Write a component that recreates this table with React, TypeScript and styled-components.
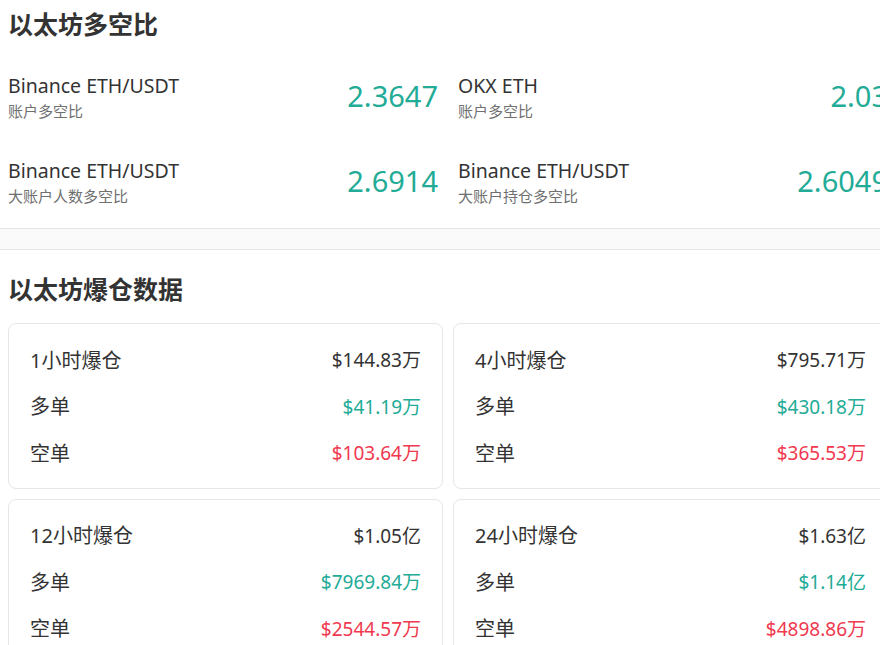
import React from "react";
import styled, { createGlobalStyle } from "styled-components";

const GlobalStyle = createGlobalStyle`
  html, body {
    margin: 0;
    padding: 0;
    overflow: hidden;
    background: #ffffff;
  }
  body {
    font-family: "Noto Sans", "Noto Sans CJK SC", sans-serif;
    color: #333333;
  }
`;

const GREEN = "#22ab96";
const RED = "#f0384f";

const Page = styled.div`
  width: 896px;
  background: #ffffff;
`;

const Section = styled.section<{ $top: number; $bottom: number }>`
  padding: ${(p) => p.$top}px 8px ${(p) => p.$bottom}px;
`;

const Title = styled.h2`
  margin: 0;
  font-family: "Noto Sans CJK SC", "Noto Sans", sans-serif;
  font-size: 25px;
  line-height: 32px;
  font-weight: 700;
  color: #333333;
`;

const RatioGrid = styled.div`
  display: grid;
  grid-template-columns: 430px 430px;
  column-gap: 20px;
  margin-top: 16px;
`;

const RatioItem = styled.div`
  display: flex;
  align-items: center;
  justify-content: space-between;
  padding: 18px 0;
`;

const RatioText = styled.div`
  display: flex;
  flex-direction: column;
  gap: 1px;
`;

const RatioName = styled.div`
  font-size: 19.5px;
  line-height: 26px;
  color: #333333;
`;

const RatioSub = styled.div`
  font-family: "Noto Sans CJK SC", sans-serif;
  font-size: 15px;
  line-height: 22px;
  color: #707070;
`;

const RatioValue = styled.div`
  font-size: 29px;
  line-height: 36px;
  color: ${GREEN};
  margin-top: -4px;
  white-space: nowrap;
`;

const Divider = styled.div`
  height: 20px;
  background: #fafafa;
  border-top: 1px solid #e6e6e6;
  border-bottom: 1px solid #e6e6e6;
`;

const CardGrid = styled.div`
  display: grid;
  grid-template-columns: 435px 435px;
  gap: 10px;
  margin-top: 19px;
`;

const Card = styled.div`
  border: 1px solid #e6e6e6;
  border-radius: 8px;
  padding: 12px 21px 12px 21px;
`;

const Row = styled.div`
  display: flex;
  align-items: center;
  justify-content: space-between;
  height: 46.5px;
`;

const RowLabel = styled.span`
  font-size: 20px;
  color: #333333;
`;

const RowValue = styled.span<{ $tone: "main" | "long" | "short" }>`
  font-size: 19px;
  color: ${(p) => (p.$tone === "long" ? GREEN : p.$tone === "short" ? RED : "#333333")};
`;

const ratios = [
  { name: "Binance ETH/USDT", sub: "账户多空比", value: "2.3647" },
  { name: "OKX ETH", sub: "账户多空比", value: "2.03" },
  { name: "Binance ETH/USDT", sub: "大账户人数多空比", value: "2.6914" },
  { name: "Binance ETH/USDT", sub: "大账户持仓多空比", value: "2.6049" },
];

const cards = [
  { label: "1小时爆仓", total: "$144.83万", long: "$41.19万", short: "$103.64万" },
  { label: "4小时爆仓", total: "$795.71万", long: "$430.18万", short: "$365.53万" },
  { label: "12小时爆仓", total: "$1.05亿", long: "$7969.84万", short: "$2544.57万" },
  { label: "24小时爆仓", total: "$1.63亿", long: "$1.14亿", short: "$4898.86万" },
];

export default function App() {
  return (
    <Page>
      <GlobalStyle />
      <Section $top={7} $bottom={3}>
        <Title>以太坊多空比</Title>
        <RatioGrid>
          {ratios.map((r, i) => (
            <RatioItem key={i}>
              <RatioText>
                <RatioName>{r.name}</RatioName>
                <RatioSub>{r.sub}</RatioSub>
              </RatioText>
              <RatioValue>{r.value}</RatioValue>
            </RatioItem>
          ))}
        </RatioGrid>
      </Section>
      <Divider />
      <Section $top={22} $bottom={20}>
        <Title>以太坊爆仓数据</Title>
        <CardGrid>
          {cards.map((c, i) => (
            <Card key={i}>
              <Row>
                <RowLabel>{c.label}</RowLabel>
                <RowValue $tone="main">{c.total}</RowValue>
              </Row>
              <Row>
                <RowLabel>多单</RowLabel>
                <RowValue $tone="long">{c.long}</RowValue>
              </Row>
              <Row>
                <RowLabel>空单</RowLabel>
                <RowValue $tone="short">{c.short}</RowValue>
              </Row>
            </Card>
          ))}
        </CardGrid>
      </Section>
    </Page>
  );
}
